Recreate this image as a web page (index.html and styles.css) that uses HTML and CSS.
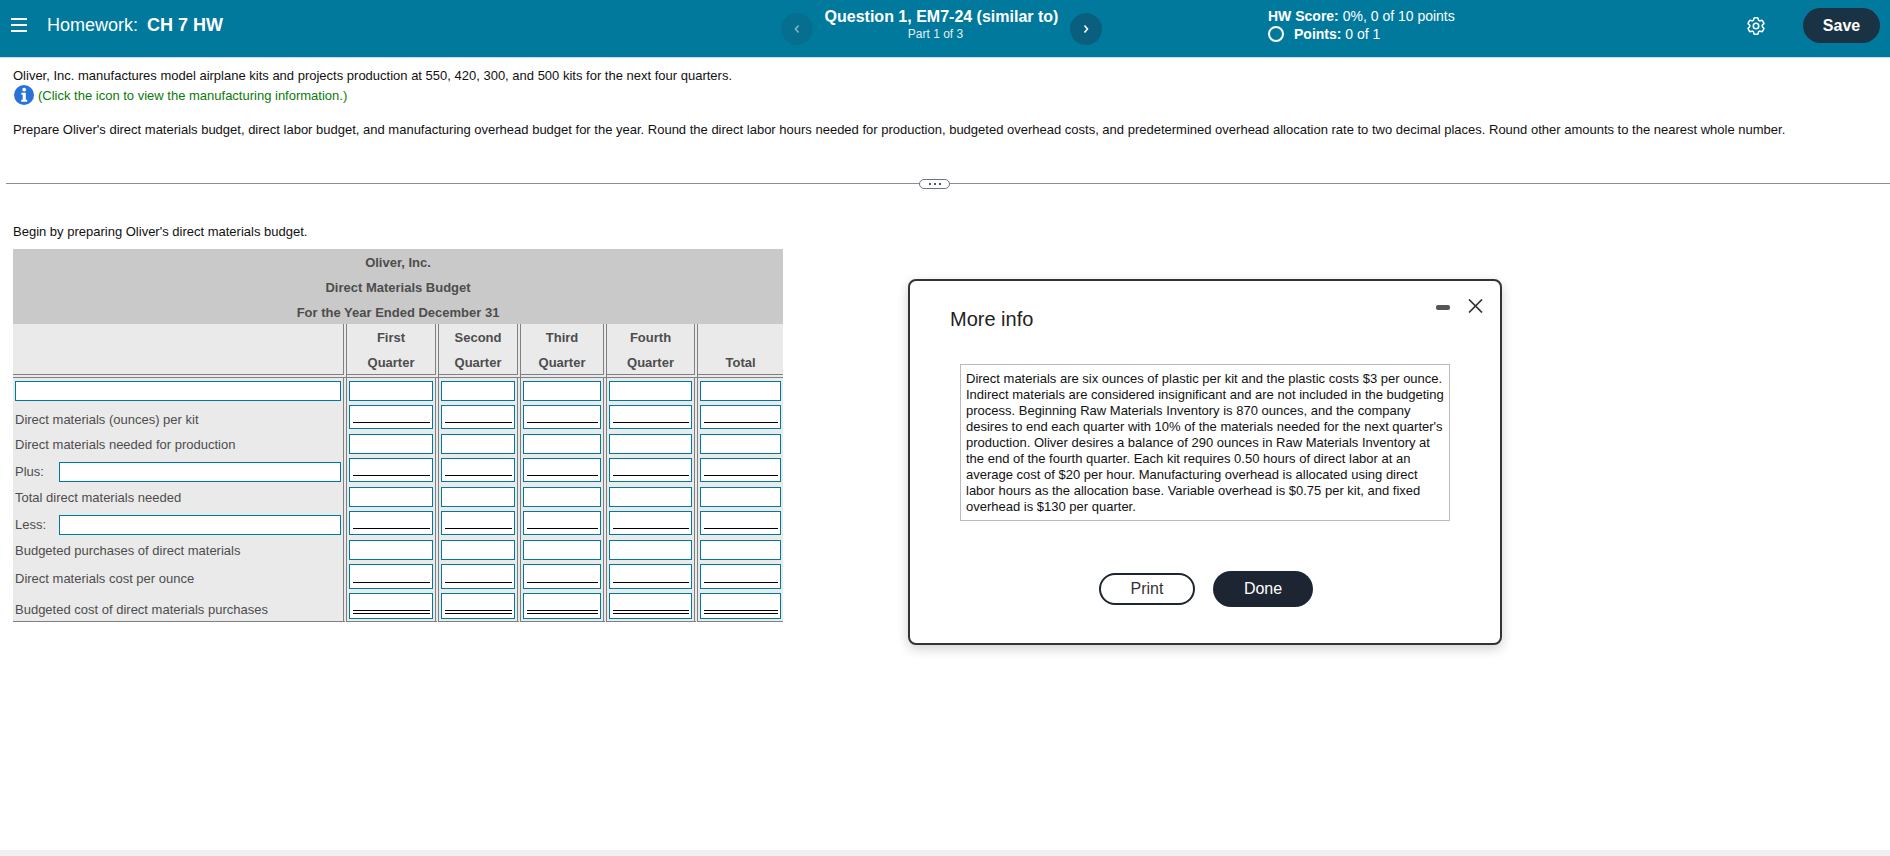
FILE: index.html
```html
<!DOCTYPE html>
<html lang="en">
<head>
<meta charset="utf-8">
<title>Homework: CH 7 HW</title>
<link rel="stylesheet" href="styles.css">
</head>
<body>
<header class="topbar">
  <div class="hw-title">
    <svg class="menu-icon" viewBox="0 0 16 14" aria-hidden="true"><path d="M0 1h16M0 7h16M0 13h16"/></svg>
    <span class="hw-name">Homework:</span><strong class="hw-value">CH 7 HW</strong>
  </div>
  <div class="question-nav">
    <button class="nav-btn prev" type="button"><svg viewBox="0 0 10 12" aria-hidden="true"><path d="M6.5 2.5 3.5 6l3 3.5"/></svg></button>
    <div class="question-text">
      <div class="question-name">Question 1, EM7-24 (similar to)</div>
      <div class="question-part">Part 1 of 3</div>
    </div>
    <button class="nav-btn next" type="button"><svg viewBox="0 0 10 12" aria-hidden="true"><path d="M3.5 2.5 6.5 6l-3 3.5"/></svg></button>
  </div>
  <div class="score">
    <div class="score-line"><b>HW Score:</b> 0%, 0 of 10 points</div>
    <div class="points-line"><span class="ring"></span><span><b>Points:</b> 0 of 1</span></div>
  </div>
  <div class="actions">
    <svg class="gear" viewBox="0 0 24 24" aria-hidden="true"><path d="M9.594 3.94c.09-.542.56-.94 1.11-.94h2.593c.55 0 1.02.398 1.11.94l.213 1.281c.063.374.313.686.645.87.074.04.147.083.22.127.325.196.72.257 1.075.124l1.217-.456a1.125 1.125 0 0 1 1.37.49l1.296 2.247a1.125 1.125 0 0 1-.26 1.431l-1.003.827c-.293.241-.438.613-.43.992a7.723 7.723 0 0 1 0 .255c-.008.378.137.75.43.991l1.004.827c.424.35.534.955.26 1.43l-1.298 2.247a1.125 1.125 0 0 1-1.369.491l-1.217-.456c-.355-.133-.75-.072-1.076.124a6.47 6.47 0 0 1-.22.128c-.331.183-.581.495-.644.869l-.213 1.281c-.09.543-.56.94-1.11.94h-2.594c-.55 0-1.019-.398-1.11-.94l-.213-1.281c-.062-.374-.312-.686-.644-.87a6.52 6.52 0 0 1-.22-.127c-.325-.196-.72-.257-1.076-.124l-1.217.456a1.125 1.125 0 0 1-1.369-.49l-1.297-2.247a1.125 1.125 0 0 1 .26-1.431l1.004-.827c.292-.24.437-.613.43-.991a6.932 6.932 0 0 1 0-.255c.007-.38-.138-.751-.43-.992l-1.004-.827a1.125 1.125 0 0 1-.26-1.43l1.297-2.247a1.125 1.125 0 0 1 1.37-.491l1.216.456c.356.133.751.072 1.076-.124.072-.044.146-.086.22-.128.332-.183.582-.495.644-.869l.214-1.28Z"/><circle cx="12" cy="12" r="3"/></svg>
    <button class="save-btn" type="button">Save</button>
  </div>
</header>

<main class="content">
  <section class="problem">
    <p class="line">Oliver, Inc. manufactures model airplane kits and projects production at 550, 420, 300, and 500 kits for the next four quarters.</p>
    <p class="info-line">
      <svg class="info-icon" viewBox="0 0 20 20" aria-hidden="true"><circle cx="10" cy="10" r="10"/><circle class="dot" cx="10.2" cy="4.6" r="1.9"/><path class="stem" d="M7.4 7.8h4.4v7h1.4v1.9H7.2v-1.9h1.5v-5.1H7.4z"/></svg>
      <span>(Click the icon to view the manufacturing information.)</span>
    </p>
    <p class="line prepare">Prepare Oliver's direct materials budget, direct labor budget, and manufacturing overhead budget for the year. Round the direct labor hours needed for production, budgeted overhead costs, and predetermined overhead allocation rate to two decimal places. Round other amounts to the nearest whole number.</p>
  </section>

  <div class="divider"><span class="pill"><i></i><i></i><i></i></span></div>

  <p class="line begin">Begin by preparing Oliver's direct materials budget.</p>

  <table class="budget">
    <colgroup><col class="c0"><col class="c1"><col class="c2"><col class="c3"><col class="c4"><col class="c5"></colgroup>
    <thead>
      <tr class="title-row"><th colspan="6">Oliver, Inc.</th></tr>
      <tr class="title-row"><th colspan="6">Direct Materials Budget</th></tr>
      <tr class="title-row"><th colspan="6">For the Year Ended December 31</th></tr>
      <tr class="head-top"><th></th><th>First</th><th>Second</th><th>Third</th><th>Fourth</th><th>&nbsp;</th></tr>
      <tr class="head-bottom"><th></th><th>Quarter</th><th>Quarter</th><th>Quarter</th><th>Quarter</th><th>Total</th></tr>
    </thead>
    <tbody>
      <tr class="r-plain first"><td><input class="box wide" type="text"></td><td><input class="box" type="text"></td><td><input class="box" type="text"></td><td><input class="box" type="text"></td><td><input class="box" type="text"></td><td><input class="box" type="text"></td></tr>
      <tr class="r-under"><td class="label">Direct materials (ounces) per kit</td><td><div class="ubox"><span></span></div></td><td><div class="ubox"><span></span></div></td><td><div class="ubox"><span></span></div></td><td><div class="ubox"><span></span></div></td><td><div class="ubox"><span></span></div></td></tr>
      <tr class="r-plain"><td class="label">Direct materials needed for production</td><td><input class="box" type="text"></td><td><input class="box" type="text"></td><td><input class="box" type="text"></td><td><input class="box" type="text"></td><td><input class="box" type="text"></td></tr>
      <tr class="r-under"><td class="label"><div class="label-input"><span>Plus:</span><input class="box" type="text"></div></td><td><div class="ubox"><span></span></div></td><td><div class="ubox"><span></span></div></td><td><div class="ubox"><span></span></div></td><td><div class="ubox"><span></span></div></td><td><div class="ubox"><span></span></div></td></tr>
      <tr class="r-plain"><td class="label">Total direct materials needed</td><td><input class="box" type="text"></td><td><input class="box" type="text"></td><td><input class="box" type="text"></td><td><input class="box" type="text"></td><td><input class="box" type="text"></td></tr>
      <tr class="r-under"><td class="label"><div class="label-input"><span>Less:</span><input class="box" type="text"></div></td><td><div class="ubox"><span></span></div></td><td><div class="ubox"><span></span></div></td><td><div class="ubox"><span></span></div></td><td><div class="ubox"><span></span></div></td><td><div class="ubox"><span></span></div></td></tr>
      <tr class="r-plain"><td class="label">Budgeted purchases of direct materials</td><td><input class="box" type="text"></td><td><input class="box" type="text"></td><td><input class="box" type="text"></td><td><input class="box" type="text"></td><td><input class="box" type="text"></td></tr>
      <tr class="r-under tall"><td class="label">Direct materials cost per ounce</td><td><div class="ubox"><span></span></div></td><td><div class="ubox"><span></span></div></td><td><div class="ubox"><span></span></div></td><td><div class="ubox"><span></span></div></td><td><div class="ubox"><span></span></div></td></tr>
      <tr class="r-double"><td class="label">Budgeted cost of direct materials purchases</td><td><div class="ubox"><span></span></div></td><td><div class="ubox"><span></span></div></td><td><div class="ubox"><span></span></div></td><td><div class="ubox"><span></span></div></td><td><div class="ubox"><span></span></div></td></tr>
    </tbody>
  </table>
</main>

<div class="footer-bar"></div>

<aside class="modal">
  <div class="modal-tools">
    <span class="min-icon"></span>
    <svg class="close-icon" viewBox="0 0 15 14" aria-hidden="true"><path d="M1 .5 14 13.5M14 .5 1 13.5"/></svg>
  </div>
  <h2 class="modal-title">More info</h2>
  <div class="modal-text">Direct materials are six ounces of plastic per kit and the plastic costs $3 per ounce. Indirect materials are considered insignificant and are not included in the budgeting process. Beginning Raw Materials Inventory is 870 ounces, and the company desires to end each quarter with 10% of the materials needed for the next quarter's production. Oliver desires a balance of 290 ounces in Raw Materials Inventory at the end of the fourth quarter. Each kit requires 0.50 hours of direct labor at an average cost of $20 per hour. Manufacturing overhead is allocated using direct labor hours as the allocation base. Variable overhead is $0.75 per kit, and fixed overhead is $130 per quarter.</div>
  <div class="modal-buttons">
    <button class="btn-print" type="button">Print</button>
    <button class="btn-done" type="button">Done</button>
  </div>
</aside>
</body>
</html>
```
FILE: styles.css
```css
* { box-sizing: border-box; }
html, body { height: 100%; }
body {
  margin: 0;
  display: flex;
  flex-direction: column;
  overflow: hidden;
  background: #fff;
  color: #111;
  font-family: "Liberation Sans", Arial, sans-serif;
  font-size: 13px;
}
button { font-family: inherit; cursor: pointer; }

/* top bar */
.topbar {
  flex: none;
  height: 58px;
  display: grid;
  grid-template-columns: 781px 321px 420px 1fr;
  align-items: center;
  background: #00799c;
  border-bottom: 1px solid #c9dfe7;
  color: #fff;
}
.hw-title { display: flex; align-items: center; padding-left: 11px; font-size: 18px; margin-top: -7px; }
.menu-icon { width: 16px; height: 14px; margin-right: 20px; }
.menu-icon path { stroke: #fff; stroke-width: 2; fill: none; }
.hw-name { margin-right: 9px; }
.hw-value { font-weight: 700; }
.question-nav { display: flex; align-items: center; }
.nav-btn {
  flex: none;
  width: 32px;
  height: 32px;
  border: 0;
  border-radius: 50%;
  padding: 0;
  display: flex;
  align-items: center;
  justify-content: center;
}
.nav-btn svg { width: 10px; height: 12px; }
.nav-btn path { fill: none; stroke-width: 1.6; }
.prev { background: #066f8f; }
.prev path { stroke: #7fb6c8; }
.next { background: #0a5f7f; }
.next path { stroke: #fff; }
.question-text { flex: 1; text-align: center; margin-top: -7px; }
.question-name { font-size: 16px; font-weight: 700; line-height: 19px; }
.question-part { font-size: 12px; line-height: 17px; color: #e3eff3; padding-right: 12px; }
.score { font-size: 14px; line-height: 18px; margin-top: -7px; padding-left: 166px; }
.score b { font-weight: 700; }
.points-line { display: flex; align-items: center; }
.ring { width: 16px; height: 16px; border: 2px solid #fff; border-radius: 50%; margin-right: 10px; }
.actions { display: flex; align-items: center; justify-content: flex-end; padding-right: 10px; margin-top: -6px; }
.gear { width: 22px; height: 22px; margin-right: 36px; fill: none; stroke: #fff; stroke-width: 1.7; }
.save-btn {
  width: 77px;
  height: 35px;
  border: 0;
  border-radius: 18px;
  background: #1a3344;
  color: #fff;
  font-size: 16px;
  font-weight: 700;
}

/* content */
.content { flex: 1; padding-top: 10px; min-height: 0; }
.line { margin: 0 0 0 13px; line-height: 16px; font-size: 13px; color: #111; }
.info-line { margin: 1px 0 0 14px; display: flex; align-items: center; gap: 4px; color: #0b7a0b; font-size: 13px; height: 20px; }
.info-icon { width: 20px; height: 20px; flex: none; }
.info-icon > circle { fill: #2a72d8; }
.info-icon .dot, .info-icon .stem { fill: #fff; }
.prepare { margin-top: 17px; }
.divider { position: relative; height: 1px; background: #8a8f98; margin: 45px 0 0 6px; }
.pill {
  position: absolute;
  left: 913px;
  top: -4px;
  width: 31px;
  height: 10px;
  border: 1px solid #6f7681;
  border-radius: 5px;
  background: #fff;
  display: flex;
  align-items: center;
  justify-content: center;
  gap: 3px;
}
.pill i { width: 2px; height: 2px; background: #555; }
.begin { margin-top: 40px; }

/* table */
.budget {
  margin: 9px 0 0 13px;
  width: 770px;
  table-layout: fixed;
  border-collapse: separate;
  border-spacing: 0;
  font-size: 13px;
  color: #4d4d4d;
}
.c0 { width: 334px; }
.c1 { width: 92px; }
.c2 { width: 82px; }
.c3 { width: 86px; }
.c4 { width: 91px; }
.c5 { width: 85px; }
.budget th { font-weight: 700; padding: 0 0 3px; line-height: 16px; vertical-align: bottom; text-align: center; }
.title-row { height: 25px; }
.title-row th { background: #c9c9c9; }
.head-top { height: 25px; }
.head-bottom { height: 29px; }
.head-top th, .head-bottom th { background: #eaeaea; border-right: 4px double #808080; }
.head-top th:last-child, .head-bottom th:last-child { border-right: 0; }
.head-bottom th { border-bottom: 4px double #808080; padding-bottom: 3px; }
.budget td {
  background: #eaeaea;
  border-right: 4px double #808080;
  padding: 2px;
  vertical-align: bottom;
}
.budget td:last-child { border-right: 0; }
.budget td.label { padding: 0 2px 3px; line-height: 16px; }
.budget .tall td.label { padding-bottom: 4px; }
.r-plain { height: 25px; }
.r-under { height: 28px; }
.r-under.tall { height: 29px; }
.r-double { height: 31px; }
.r-double td { border-bottom: 1px solid #808080; }
.box {
  display: block;
  width: 100%;
  height: 20px;
  margin: 0;
  padding: 0;
  border: 1px solid #007a9c;
  border-radius: 0;
  background: #fff;
}
.ubox {
  height: 24px;
  border: 1px solid #007a9c;
  background: #fff;
  padding: 0 2px 5px 3px;
}
.ubox span { display: block; height: 100%; border-bottom: 1px solid #000; }
.tall .ubox { height: 25px; }
.r-double .ubox { height: 26px; padding-bottom: 4px; }
.r-double .ubox span { border-bottom: 4px double #000; }
.budget td.label:has(.label-input) { padding-bottom: 2px; }
.label-input { display: flex; align-items: center; }
.label-input span { flex: none; width: 44px; }
.label-input .box { flex: 1; }

/* footer */
.footer-bar { flex: none; height: 6px; background: #f0f0f0; }

/* modal */
.modal {
  position: absolute;
  left: 908px;
  top: 279px;
  width: 594px;
  height: 366px;
  padding: 0 42px;
  background: #fff;
  border: 2px solid #333;
  border-radius: 8px;
  box-shadow: 0 4px 12px rgba(0, 0, 0, .18);
}
.modal-tools { position: absolute; top: 18px; right: 17px; display: flex; align-items: center; gap: 18px; }
.min-icon { width: 14px; height: 5px; border-radius: 2px; background: #555; margin-top: 3px; }
.close-icon { width: 15px; height: 14px; }
.close-icon path { fill: none; stroke: #333; stroke-width: 1.7; }
.modal-title { margin: 25px 0 0 -2px; font-size: 20px; font-weight: 400; line-height: 26px; color: #222; }
.modal-text {
  margin: 32px 0 0 8px;
  width: 490px;
  height: 157px;
  padding: 6px 5px;
  border: 1px solid #bbb;
  font-size: 13px;
  line-height: 16px;
  color: #111;
}
.modal-buttons { display: flex; align-items: center; gap: 18px; margin: 50px 0 0 147px; }
.btn-print {
  width: 96px;
  height: 32px;
  border: 2px solid #1e2532;
  border-radius: 16px;
  background: #fff;
  color: #333;
  font-size: 16px;
}
.btn-done {
  width: 100px;
  height: 36px;
  border: 0;
  border-radius: 18px;
  background: #1e2532;
  color: #fff;
  font-size: 16px;
}
```
